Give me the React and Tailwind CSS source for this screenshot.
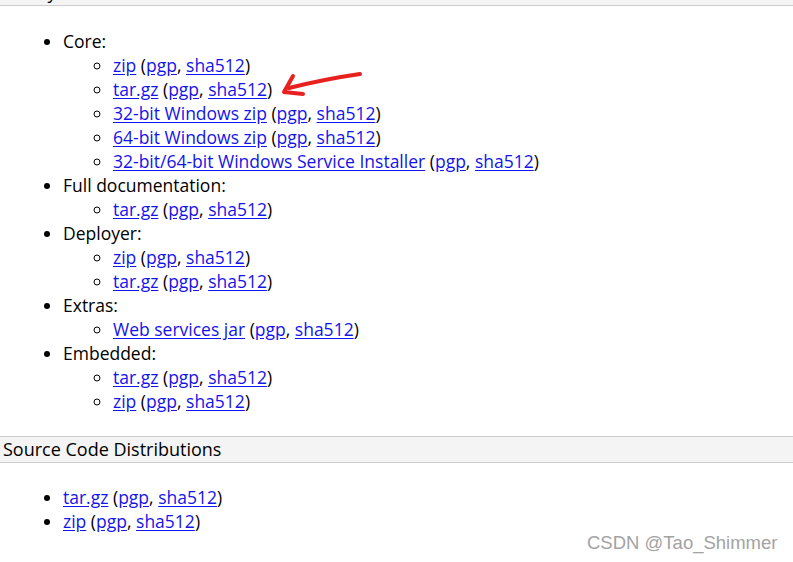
import React from "react";

const link = "text-[#1414ea] underline underline-offset-2";

function Sig({ name }) {
  return (
    <>
      <a href="#" className={link}>{name}</a> (
      <a href="#" className={link}>pgp</a>,{" "}
      <a href="#" className={link}>sha512</a>)
    </>
  );
}

const groups = [
  { title: "Core:", items: ["zip", "tar.gz", "32-bit Windows zip", "64-bit Windows zip", "32-bit/64-bit Windows Service Installer"] },
  { title: "Full documentation:", items: ["tar.gz"] },
  { title: "Deployer:", items: ["zip", "tar.gz"] },
  { title: "Extras:", items: ["Web services jar"] },
  { title: "Embedded:", items: ["tar.gz", "zip"] },
];

function Header({ children, className = "" }) {
  return (
    <div className={"h-[27px] bg-[#f4f4f4] border-y border-[#cdcdcd] pl-[3px] text-[18px] leading-[25px] " + className}>
      {children}
    </div>
  );
}

export default function App() {
  return (
    <div className="relative w-[793px] h-[562px] overflow-hidden bg-white text-black font-['Open_Sans',sans-serif] text-[17.5px] leading-[24px]">
      <Header className="-mt-[21px]">Binary Distributions</Header>

      <ul className="list-disc pl-[63px] mt-[23px] mb-[23px]">
        {groups.map((g) => (
          <li key={g.title}>
            {g.title}
            <ul className="list-[circle] pl-[50px]">
              {g.items.map((it, i) => (
                <li key={i}>
                  <Sig name={it} />
                </li>
              ))}
            </ul>
          </li>
        ))}
      </ul>

      <Header>Source Code Distributions</Header>

      <ul className="list-disc pl-[63px] mt-[22px]">
        <li><Sig name="tar.gz" /></li>
        <li><Sig name="zip" /></li>
      </ul>

      {/* red annotation arrow */}
      <svg className="absolute left-0 top-0" width="793" height="562" fill="none">
        <path d="M360 74 Q325 79 289 88" stroke="#e8211f" strokeWidth="4" strokeLinecap="round" />
        <path d="M293 76 L284 92 L303 94" stroke="#e8211f" strokeWidth="4" strokeLinecap="round" strokeLinejoin="round" />
      </svg>

      <div className="absolute left-[587px] top-[532px] font-['Liberation_Sans',sans-serif] text-[18.5px] leading-[22px] text-[#a3a3a3]">
        CSDN @Tao_Shimmer
      </div>
    </div>
  );
}
